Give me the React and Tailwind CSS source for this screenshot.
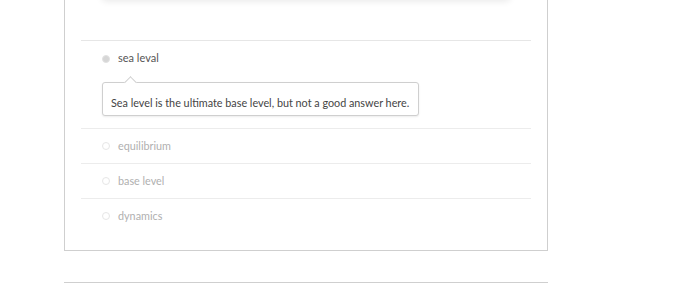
export default function App() {
  const options = ["equilibrium", "base level", "dynamics"];
  return (
    <div className="w-[700px] h-[284px] overflow-hidden bg-white font-['Lato',sans-serif]">
      <div className="ml-[64px] w-[484px] h-[251px] border-x border-b border-[#cfcfcf] flex flex-col">
        <div className="mx-[36px] -mt-[20px] h-[20px] rounded-b-md bg-white shadow-[0_2px_6px_rgba(0,0,0,0.08)]" />
        <div className="mx-[16px] mt-[40px] border-t border-[#e6e6e6]">
          <div className="h-[34px] flex items-center pl-[21px] pt-[1px]">
            <span className="w-[8px] h-[8px] rounded-full bg-[#d6d6d6] border border-[#e2e2e2]" />
            <span className="ml-[8px] text-[11px] text-[#555]">sea leval</span>
          </div>
          <div className="relative ml-[21px] mt-[7px] w-[317px] h-[34px] border border-[#cfcfcf] rounded-[3px] bg-white shadow-[0_1px_2px_rgba(0,0,0,0.08)] flex items-center pl-[8px] pt-[8px]">
            <span className="absolute -top-[5px] left-[23px] w-[9px] h-[9px] bg-white border-l border-t border-[#cfcfcf] rotate-45" />
            <span className="text-[10.8px] text-[#444]">Sea level is the ultimate base level, but not a good answer here.</span>
          </div>
          <div className="mt-[12px]">
            {options.map((o) => (
              <div key={o} className="h-[35px] border-t border-[#ececec] flex items-center pl-[21px] pt-[0px]">
                <span className="w-[8px] h-[8px] rounded-full border border-[#e6e6e6]" />
                <span className="ml-[8px] text-[10.8px] text-[#b0b0b0]">{o}</span>
              </div>
            ))}
          </div>
        </div>
      </div>
      <div className="ml-[64px] mt-[31px] w-[484px] border-t border-[#cfcfcf]" />
    </div>
  );
}
